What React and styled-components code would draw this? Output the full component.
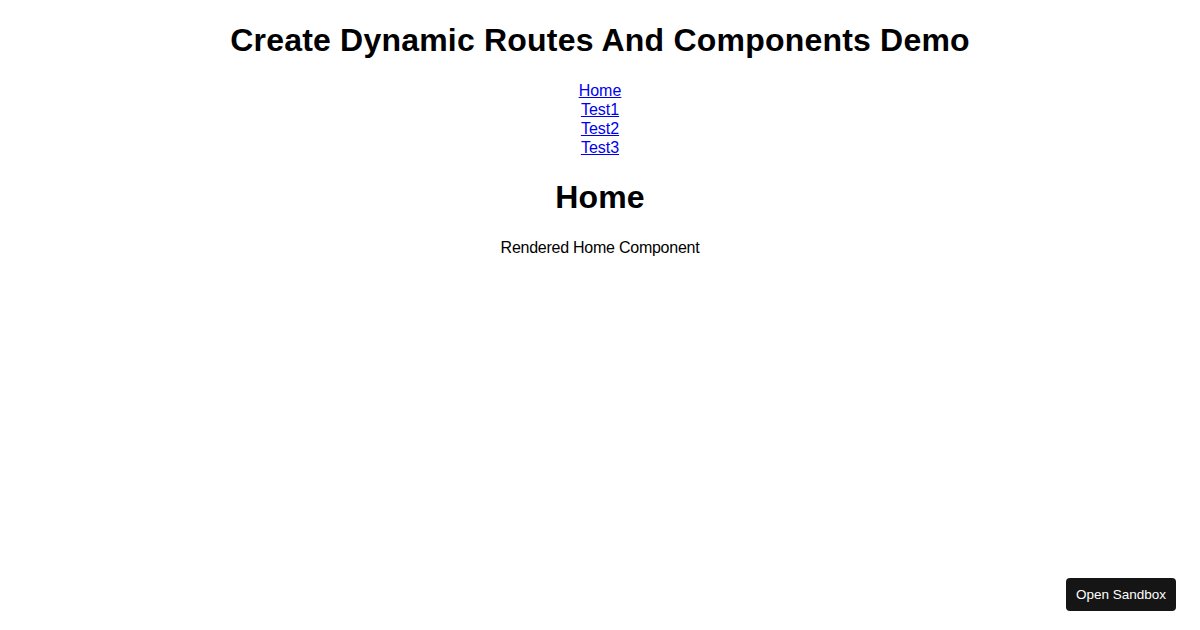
import styled, { createGlobalStyle } from 'styled-components'

const GlobalStyle = createGlobalStyle`
    body {
        margin: 0;
        padding: 0 8px;
        background: #fff;
        font-family: 'Liberation Sans', Arial, sans-serif;
    }
`

const Page = styled.div`
    text-align: center;
    color: #000;
    padding-top: 1px;
`

const Title = styled.h1`
    font-size: 32px;
    font-weight: bold;
    letter-spacing: 0.2px;
    margin: ${props => props.$top}px 0 22.4px;
`

const Nav = styled.nav`
    display: flex;
    flex-direction: column;
    align-items: center;
    line-height: 19px;
`

const NavLink = styled.a`
    color: #0000ee;
    text-decoration: underline;
    font-size: 16px;
`

const Text = styled.p`
    font-size: 16px;
    letter-spacing: -0.25px;
    margin: 19px 0 16px;
`

const SandboxButton = styled.button`
    position: fixed;
    right: 24px;
    bottom: 19px;
    height: 33px;
    padding: 0 10px;
    border: 0;
    border-radius: 4px;
    background: #151515;
    color: #fff;
    font-family: 'Liberation Sans', Arial, sans-serif;
    font-size: 13.5px;
    cursor: pointer;
`

const links = ['Home', 'Test1', 'Test2', 'Test3']

export default function App() {
    return (
        <>
            <GlobalStyle />
            <Page>
                <Title $top={20.5}>Create Dynamic Routes And Components Demo</Title>
                <Nav>
                    {links.map(name => (
                        <NavLink key={name} href={'#/' + name.toLowerCase()}>
                            {name}
                        </NavLink>
                    ))}
                </Nav>
                <Title $top={22.5}>Home</Title>
                <Text>Rendered Home Component</Text>
            </Page>
            <SandboxButton>Open Sandbox</SandboxButton>
        </>
    )
}
